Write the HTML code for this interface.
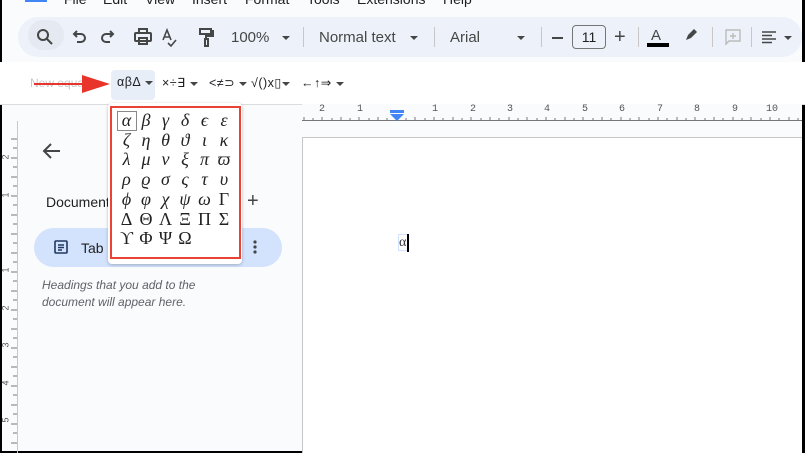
<!DOCTYPE html>
<html><head><meta charset="utf-8"><style>
*{margin:0;padding:0;box-sizing:border-box}
body{width:805px;height:453px;overflow:hidden;background:#f9fbfd;font-family:"Liberation Sans",Arial,sans-serif;position:relative;color:#444746}
.a{position:absolute}
.menu span{position:absolute;top:-9px;font-size:14px;color:#1f1f1f}
.tb{left:18px;top:17px;width:784px;height:40px;background:#edf2fa;border-radius:20px}
.t{position:absolute;font-size:15px;color:#444746;top:29px}
.sep{position:absolute;top:27px;width:1px;height:20px;background:#c7c7c7}
.caret{display:inline-block;width:0;height:0;border-left:4px solid transparent;border-right:4px solid transparent;border-top:4px solid #444746;vertical-align:middle}
.eq{position:absolute;top:75px;font-size:12.5px;color:#202124;letter-spacing:0.5px}
.g{position:absolute;font-family:"Liberation Serif",serif;font-style:italic;font-size:18px;color:#222;width:19px;text-align:center;line-height:20px}
.G{font-style:normal}
.rn{position:absolute;top:104px;font-family:"Liberation Mono",monospace;font-size:10px;color:#555}
.vn{position:absolute;left:3px;font-size:9px;color:#555;transform:rotate(-90deg)}
</style></head><body>
<div class="a" style="left:0;top:0;width:2px;height:453px;background:#000"></div>
<div class="a" style="right:0;top:0;width:3px;height:453px;background:#000"></div>
<div class="a" style="left:0;bottom:0;width:805px;height:2px;background:#000"></div>
<div class="a" style="left:25px;top:0;width:22px;height:2px;background:#4285f4"></div>
<div class="menu"><span style="left:64px">File</span><span style="left:103px">Edit</span><span style="left:145px">View</span><span style="left:192px">Insert</span><span style="left:245px">Format</span><span style="left:307px">Tools</span><span style="left:357px">Extensions</span><span style="left:443px">Help</span></div>
<div class="a tb"></div>
<div class="a" style="left:28px;top:20px;width:36px;height:30px;background:#e4e9f2;border-radius:15px"></div>
<svg class="a" style="left:0;top:0" width="805" height="60" fill="none" stroke="#444746" stroke-width="2">
<circle cx="43" cy="35" r="5"/><path d="M47 39l5 5"/>
<path d="M74 34h7a4 4 0 0 1 0 8h-4M77 31l-3 3 3 3"/>
<path d="M113 34h-7a4 4 0 0 0 0 8h4M110 31l3 3-3 3"/>
<rect x="135" y="33" width="16" height="8" rx="1"/><rect x="139" y="29" width="8" height="4"/><rect x="139" y="38" width="8" height="6"/>
<path d="M163 40l4-10 4 10M164.5 37h5M168 43l3 3 5-6" stroke-width="1.6"/>
<rect x="200" y="29" width="11" height="5"/><path d="M211 31h2v5h-7v3" /><rect x="205" y="39" width="3" height="7"/>
</svg>
<div class="t" style="left:231px">100%</div><span class="a caret" style="left:282px;top:36px"></span>
<div class="sep" style="left:303px"></div>
<div class="t" style="left:319px">Normal text</div><span class="a caret" style="left:410px;top:36px"></span>
<div class="sep" style="left:434px"></div>
<div class="t" style="left:450px">Arial</div><span class="a caret" style="left:517px;top:36px"></span>
<div class="sep" style="left:541px"></div>
<div class="a" style="left:552px;top:37px;width:11px;height:2px;background:#444746"></div>
<div class="a" style="left:572px;top:25px;width:34px;height:24px;border:1px solid #747775;border-radius:4px;font-size:14px;text-align:center;line-height:22px;color:#1f1f1f">11</div>
<div class="t" style="left:614px;top:26px;font-size:20px">+</div>
<div class="sep" style="left:638px"></div>
<div class="t" style="left:651px;top:27px">A</div>
<div class="a" style="left:647px;top:43px;width:22px;height:4px;background:#000"></div>
<svg class="a" style="left:683px;top:27px" width="16" height="16"><path d="M3 13l2-5 6-6 3 3-6 6z" fill="#444746"/></svg>
<div class="sep" style="left:712px"></div>
<svg class="a" style="left:724px;top:28px" width="18" height="18" fill="none" stroke="#bbb" stroke-width="1.4"><path d="M2 2h14v11H5l-3 3z"/><path d="M9 5v6M6 8h6"/></svg>
<div class="sep" style="left:751px"></div>
<svg class="a" style="left:761px;top:30px" width="18" height="14" stroke="#444746" stroke-width="1.5"><path d="M1 2h14M1 5.5h10M1 9h14M1 12.5h10"/></svg>
<span class="a caret" style="left:784px;top:36px"></span>
<div class="a" style="left:0;top:62px;width:805px;height:42px;background:#fff"></div>
<div class="a" style="left:30px;top:76px;font-size:12px;color:#c8c8c8">New equa</div>
<div class="a" style="left:111px;top:70px;width:44px;height:30px;background:#e8eef8;border-radius:4px"></div>
<svg class="a" style="left:32px;top:72px" width="80" height="24"><path d="M2 11h50v2H2z" fill="#e8342b"/><path d="M50 3l28 9-28 9z" fill="#e8342b"/></svg>
<div class="eq" style="left:117px">αβΔ <span class="caret"></span></div>
<div class="eq" style="left:162px">×÷∃ <span class="caret"></span></div>
<div class="eq" style="left:209px">&lt;≠⊃ <span class="caret"></span></div>
<div class="eq" style="left:251px">√()x▯<span class="caret"></span></div>
<div class="eq" style="left:301px">←↑⇒ <span class="caret"></span></div>
<div class="a" style="left:0;top:104px;width:805px;height:1px;background:#dadce0"></div>
<div class="a" style="left:302px;top:104px;width:500px;height:18px;background:#f9fbfd"></div>
<svg class="a" style="left:300px;top:104px" width="505" height="20" stroke="#777" stroke-width="1">
<path d="M2 16.5h500"/>
<path d="M4 17v-4M13 17v-3M22 17v-4M32 17v-3M41 17v-4M50 17v-3M59 17v-4M69 17v-3M78 17v-4M87 17v-3M97 17v-4M106 17v-3M115 17v-4M125 17v-3M134 17v-4M143 17v-3M153 17v-4M162 17v-3M171 17v-4M181 17v-3M190 17v-4M199 17v-3M209 17v-4M218 17v-3M227 17v-4M237 17v-3M246 17v-4M255 17v-3M265 17v-4M274 17v-3M283 17v-4M293 17v-3M302 17v-4M311 17v-3M321 17v-4M330 17v-3M339 17v-4M349 17v-3M358 17v-4M367 17v-3M377 17v-4M386 17v-3M395 17v-4M405 17v-3M414 17v-4M423 17v-3M433 17v-4M442 17v-3M451 17v-4M461 17v-3M470 17v-4M479 17v-3M489 17v-4M498 17v-3"/>
<path d="M90 6h14v3H90zM90 10h14l-7 7z" fill="#4285f4" stroke="none"/>
</svg>
<div class="rn" style="left:319px">2</div><div class="rn" style="left:357px">1</div>
<div class="rn" style="left:432px">1</div><div class="rn" style="left:470px">2</div><div class="rn" style="left:507px">3</div><div class="rn" style="left:544px">4</div><div class="rn" style="left:582px">5</div><div class="rn" style="left:619px">6</div><div class="rn" style="left:657px">7</div><div class="rn" style="left:694px">8</div><div class="rn" style="left:732px">9</div><div class="rn" style="left:766px">10</div>
<div class="a" style="left:17px;top:121px;width:1px;height:332px;background:#c8c8c8"></div>
<svg class="a" style="left:2px;top:121px" width="16" height="332" stroke="#777"><path d="M9 18h6M11 27h4M9 37h6M11 46h4M9 56h6M11 65h4M9 75h6M11 84h4M9 94h6M11 103h4M9 113h6M11 122h4M9 132h6M11 141h4M9 151h6M11 160h4M9 170h6M11 179h4M9 189h6M11 198h4M9 208h6M11 217h4M9 227h6M11 236h4M9 246h6M11 255h4M9 265h6M11 274h4M9 284h6M11 293h4M9 303h6M11 312h4M9 322h6"/></svg>
<div class="vn" style="top:152px">2</div><div class="vn" style="top:190px">1</div><div class="vn" style="top:265px">1</div><div class="vn" style="top:303px">2</div><div class="vn" style="top:340px">3</div><div class="vn" style="top:378px">4</div><div class="vn" style="top:415px">5</div>
<div class="a" style="left:302px;top:137px;width:500px;height:316px;background:#fff;border-left:1px solid #c7c7c7;border-top:1px solid #c7c7c7"></div>
<div class="a" style="left:398px;top:234px;width:10px;height:17px;border:1px solid #d3e3fd;font-family:'Liberation Serif',serif;font-size:14px;color:#333;line-height:15px">α</div>
<div class="a" style="left:407px;top:234px;width:2px;height:18px;background:#000"></div>
<svg class="a" style="left:42px;top:142px" width="20" height="18" fill="none" stroke="#444746" stroke-width="2"><path d="M18 9H3M9 2L2 9l7 7"/></svg>
<div class="a" style="left:46px;top:194px;font-size:14px;color:#1f1f1f">Document</div>
<div class="a" style="left:247px;top:190px;font-size:20px;color:#444746">+</div>
<div class="a" style="left:34px;top:228px;width:248px;height:39px;background:#d3e3fd;border-radius:20px"></div>
<svg class="a" style="left:54px;top:240px" width="14" height="14" fill="none" stroke="#1f3760" stroke-width="1.6"><rect x="1" y="1" width="12" height="12" rx="1"/><path d="M4 5h6M4 7.5h6M4 10h4"/></svg>
<div class="a" style="left:81px;top:240px;font-size:14px;color:#1f1f1f">Tab</div>
<svg class="a" style="left:252px;top:239px" width="6" height="16" fill="#444746"><circle cx="3" cy="3" r="1.6"/><circle cx="3" cy="8" r="1.6"/><circle cx="3" cy="13" r="1.6"/></svg>
<div class="a" style="left:42px;top:277px;font-size:12px;font-style:italic;color:#5f6368;line-height:17px">Headings that you add to the<br>document will appear here.</div>
<div class="a" style="left:108px;top:103px;width:134px;height:161px;background:#fff;border-radius:4px;box-shadow:0 1px 3px rgba(0,0,0,.25)"></div>
<div class="a" style="left:110px;top:106px;width:131px;height:153px;border:2px solid #ea4335"></div>
<div class="a" style="left:117px;top:111px;width:20px;height:20px;border:1px solid #888"></div>
<div id="gr"></div>
<script>
var rows=[["α","β","γ","δ","ϵ","ε"],["ζ","η","θ","ϑ","ι","κ"],["λ","μ","ν","ξ","π","ϖ"],["ρ","ϱ","σ","ς","τ","υ"],["ϕ","φ","χ","ψ","ω","Γ"],["Δ","Θ","Λ","Ξ","Π","Σ"],["ϒ","Φ","Ψ","Ω"]];
var h="";rows.forEach(function(r,i){r.forEach(function(c,j){var up=(i>=5)||(i==4&&j==5);h+='<div class="g'+(up?' G':'')+'" style="left:'+(117+j*19.5)+'px;top:'+(110+i*19.7)+'px">'+c+'</div>';});});
document.getElementById("gr").innerHTML=h;
</script>
</body></html>
